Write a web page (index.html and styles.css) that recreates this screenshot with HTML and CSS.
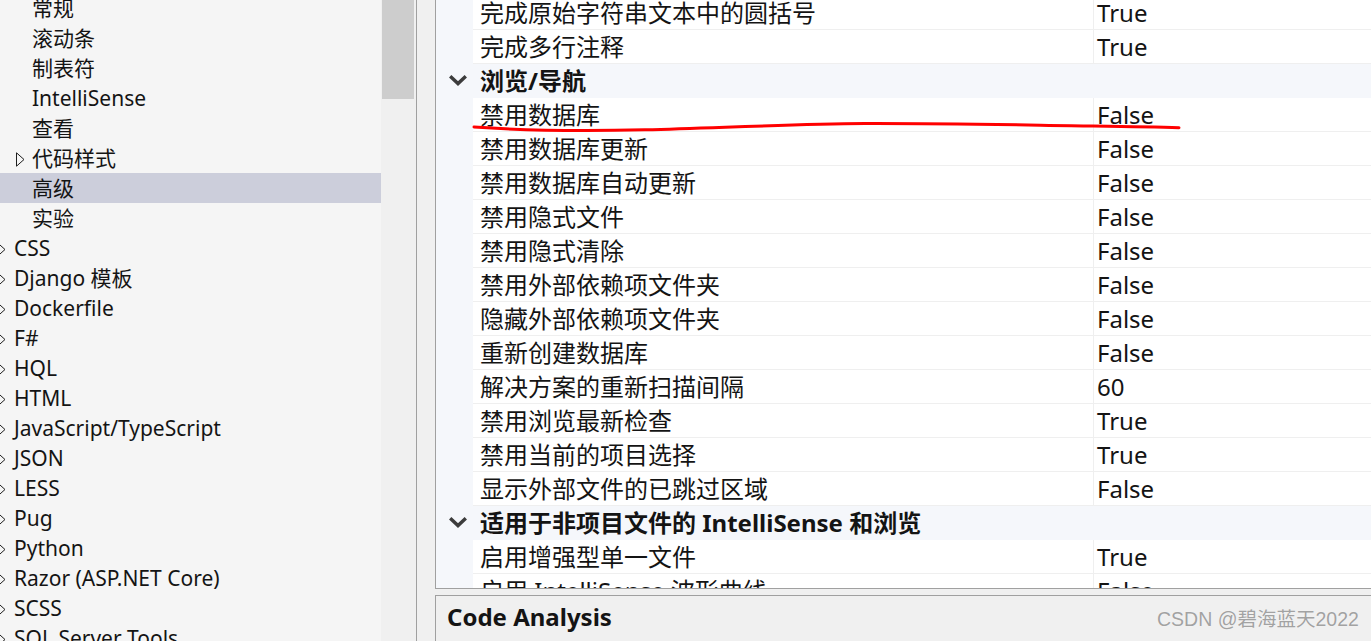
FILE: index.html
```html
<!DOCTYPE html>
<html lang="zh-CN">
<head>
<meta charset="utf-8">
<title>选项</title>
<link rel="stylesheet" href="styles.css">
</head>
<body>
<div class="app">
  <div class="left">
    <div class="tree">
      <ul class="tree-list">
        <li class="node l2">常规</li>
        <li class="node l2">滚动条</li>
        <li class="node l2">制表符</li>
        <li class="node l2">IntelliSense</li>
        <li class="node l2">查看</li>
        <li class="node l2 has"><svg class="tw" viewBox="0 0 9 15"><path d="M0.5,0.8 L8,7.5 L0.5,14.2 Z"/></svg>代码样式</li>
        <li class="node l2 sel">高级</li>
        <li class="node l2">实验</li>
        <li class="node l1 has"><svg class="tw" viewBox="0 0 9 15"><path d="M0.5,0.8 L8,7.5 L0.5,14.2 Z"/></svg>CSS</li>
        <li class="node l1 has"><svg class="tw" viewBox="0 0 9 15"><path d="M0.5,0.8 L8,7.5 L0.5,14.2 Z"/></svg>Django 模板</li>
        <li class="node l1 has"><svg class="tw" viewBox="0 0 9 15"><path d="M0.5,0.8 L8,7.5 L0.5,14.2 Z"/></svg>Dockerfile</li>
        <li class="node l1 has"><svg class="tw" viewBox="0 0 9 15"><path d="M0.5,0.8 L8,7.5 L0.5,14.2 Z"/></svg>F#</li>
        <li class="node l1 has"><svg class="tw" viewBox="0 0 9 15"><path d="M0.5,0.8 L8,7.5 L0.5,14.2 Z"/></svg>HQL</li>
        <li class="node l1 has"><svg class="tw" viewBox="0 0 9 15"><path d="M0.5,0.8 L8,7.5 L0.5,14.2 Z"/></svg>HTML</li>
        <li class="node l1 has"><svg class="tw" viewBox="0 0 9 15"><path d="M0.5,0.8 L8,7.5 L0.5,14.2 Z"/></svg>JavaScript/TypeScript</li>
        <li class="node l1 has"><svg class="tw" viewBox="0 0 9 15"><path d="M0.5,0.8 L8,7.5 L0.5,14.2 Z"/></svg>JSON</li>
        <li class="node l1 has"><svg class="tw" viewBox="0 0 9 15"><path d="M0.5,0.8 L8,7.5 L0.5,14.2 Z"/></svg>LESS</li>
        <li class="node l1 has"><svg class="tw" viewBox="0 0 9 15"><path d="M0.5,0.8 L8,7.5 L0.5,14.2 Z"/></svg>Pug</li>
        <li class="node l1 has"><svg class="tw" viewBox="0 0 9 15"><path d="M0.5,0.8 L8,7.5 L0.5,14.2 Z"/></svg>Python</li>
        <li class="node l1 has"><svg class="tw" viewBox="0 0 9 15"><path d="M0.5,0.8 L8,7.5 L0.5,14.2 Z"/></svg>Razor (ASP.NET Core)</li>
        <li class="node l1 has"><svg class="tw" viewBox="0 0 9 15"><path d="M0.5,0.8 L8,7.5 L0.5,14.2 Z"/></svg>SCSS</li>
        <li class="node l1 has"><svg class="tw" viewBox="0 0 9 15"><path d="M0.5,0.8 L8,7.5 L0.5,14.2 Z"/></svg>SQL Server Tools</li>
      </ul>
    </div>
    <div class="vscroll"><div class="thumb"></div></div>
  </div>

  <div class="right">
    <div class="grid">
      <div class="rows">
        <div class="row"><div class="gut"></div><div class="name">完成原始字符串文本中的圆括号</div><div class="val">True</div></div>
        <div class="row"><div class="gut"></div><div class="name">完成多行注释</div><div class="val">True</div></div>
        <div class="cat"><div class="gut"><svg class="chev" viewBox="0 0 20 12"><path d="M2.2,2.2 L10,9.6 L17.8,2.2"/></svg></div><div class="cname">浏览/导航</div></div>
        <div class="row"><div class="gut"></div><div class="name">禁用数据库</div><div class="val">False</div></div>
        <div class="row"><div class="gut"></div><div class="name">禁用数据库更新</div><div class="val">False</div></div>
        <div class="row"><div class="gut"></div><div class="name">禁用数据库自动更新</div><div class="val">False</div></div>
        <div class="row"><div class="gut"></div><div class="name">禁用隐式文件</div><div class="val">False</div></div>
        <div class="row"><div class="gut"></div><div class="name">禁用隐式清除</div><div class="val">False</div></div>
        <div class="row"><div class="gut"></div><div class="name">禁用外部依赖项文件夹</div><div class="val">False</div></div>
        <div class="row"><div class="gut"></div><div class="name">隐藏外部依赖项文件夹</div><div class="val">False</div></div>
        <div class="row"><div class="gut"></div><div class="name">重新创建数据库</div><div class="val">False</div></div>
        <div class="row"><div class="gut"></div><div class="name">解决方案的重新扫描间隔</div><div class="val">60</div></div>
        <div class="row"><div class="gut"></div><div class="name">禁用浏览最新检查</div><div class="val">True</div></div>
        <div class="row"><div class="gut"></div><div class="name">禁用当前的项目选择</div><div class="val">True</div></div>
        <div class="row"><div class="gut"></div><div class="name">显示外部文件的已跳过区域</div><div class="val">False</div></div>
        <div class="cat"><div class="gut"><svg class="chev" viewBox="0 0 20 12"><path d="M2.2,2.2 L10,9.6 L17.8,2.2"/></svg></div><div class="cname">适用于非项目文件的 IntelliSense 和浏览</div></div>
        <div class="row"><div class="gut"></div><div class="name">启用增强型单一文件</div><div class="val">True</div></div>
        <div class="row"><div class="gut"></div><div class="name">启用 IntelliSense 波形曲线</div><div class="val">False</div></div>
      </div>
    </div>
    <div class="desc">Code Analysis</div>
  </div>
</div>

<svg class="mark" viewBox="0 0 1371 641" width="1371" height="641">
  <path d="M474,127 C530,131 585,131.2 645,129.8 C725,127.6 790,124.2 865,123.6 C950,123.4 1020,125 1093,126 C1130,126.5 1158,127 1179,127.8"/>
</svg>
<div class="wm">CSDN @碧海蓝天2022</div>
</body>
</html>
```

FILE: styles.css
```css
html, body {
  margin: 0;
  padding: 0;
  width: 1371px;
  height: 641px;
  overflow: hidden;
  background: #f0f0f0;
}

body {
  font-family: "Noto Sans", "Noto Sans CJK SC", sans-serif;
  color: #141414;
  position: relative;
}

.app {
  display: flex;
  height: 641px;
}

/* ---------- left tree ---------- */
.left {
  display: flex;
  flex: none;
  width: 416px;
  border-right: 1px solid #a0a0a0;
}

.tree {
  width: 381px;
  background: #f5f5f5;
  overflow: hidden;
  font-size: 21px;
}

.tree-list {
  list-style: none;
  margin: -7px 0 0 0;
  padding: 0;
}

.node {
  height: 30px;
  line-height: 30px;
  display: flex;
  align-items: center;
  white-space: nowrap;
}

.node.l2 { padding-left: 32px; }
.node.l2.has { padding-left: 16px; }
.node.l1 { padding-left: 14px; }
.node.l1.has { padding-left: 0; }

.node .tw {
  flex: none;
  width: 9px;
  height: 15px;
  margin-right: 7px;
  margin-top: 3px;
  fill: none;
  stroke: #1e1e1e;
  stroke-width: 1;
}

.node.l1 .tw {
  margin-left: -3px;
  margin-right: 8px;
}

.node.sel {
  background: #cccedb;
}

.vscroll {
  width: 34px;
  padding-left: 1px;
  background: #f0f0f0;
}

.thumb {
  width: 32px;
  height: 99px;
  background: #cdcdcd;
}

/* ---------- right property grid ---------- */
.right {
  flex: 1;
  margin-left: 18px;
  display: flex;
  flex-direction: column;
  min-width: 0;
}

.grid {
  height: 588px;
  flex: none;
  background: #ffffff;
  border-left: 1px solid #a0a0a0;
  border-bottom: 1px solid #a0a0a0;
  overflow: hidden;
  font-size: 24px;
}

.rows {
  margin-top: -4px;
}

.row, .cat {
  display: flex;
  height: 34px;
  white-space: nowrap;
}

.gut {
  width: 37px;
  flex: none;
  background: #f5f7fb;
  display: flex;
  align-items: center;
}

.name {
  width: 613px;
  flex: none;
  padding-left: 7px;
  line-height: 33px;
  border-bottom: 1px solid #efefef;
}

.val {
  flex: 1;
  padding-left: 3px;
  line-height: 33px;
  border-left: 1px solid #efefef;
  border-bottom: 1px solid #efefef;
}

.cat {
  background: #f5f7fb;
}

.cname {
  padding-left: 7px;
  line-height: 34px;
  font-weight: bold;
}

.chev {
  width: 20px;
  height: 12px;
  margin-left: 12px;
  margin-top: -2px;
  fill: none;
  stroke: #3c3c3c;
  stroke-width: 3.4;
}

.desc {
  margin-top: 6px;
  flex: 1;
  background: #f0f0f0;
  border-left: 1px solid #a0a0a0;
  border-top: 1px solid #a0a0a0;
  padding: 4px 0 0 11px;
  font-size: 24px;
  line-height: 34px;
  font-weight: bold;
  white-space: nowrap;
}

/* ---------- overlays ---------- */
.mark {
  position: absolute;
  left: 0;
  top: 0;
  pointer-events: none;
  fill: none;
  stroke: #ff0000;
  stroke-width: 3;
  stroke-linecap: round;
}

.wm {
  position: absolute;
  left: 1157px;
  top: 607px;
  font-family: "Liberation Sans", "Noto Sans CJK SC", sans-serif;
  font-size: 19.5px;
  line-height: 24px;
  color: #a2a2a2;
  text-shadow: 0 0 1px #ffffff;
  white-space: nowrap;
}
```
